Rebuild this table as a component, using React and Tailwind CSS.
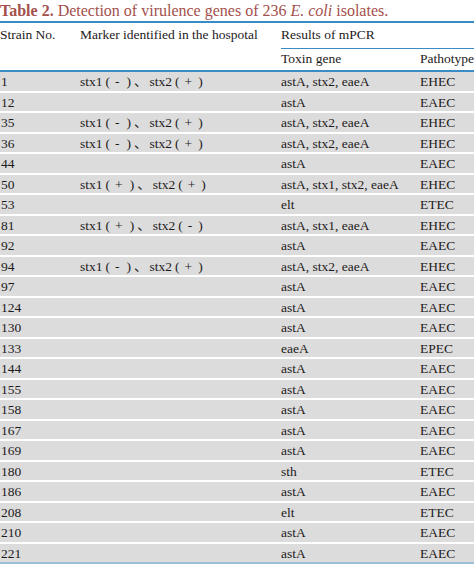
import React from "react";

const rows = [
  ["1", ["-", "+"], "astA, stx2, eaeA", "EHEC"],
  ["12", null, "astA", "EAEC"],
  ["35", ["-", "+"], "astA, stx2, eaeA", "EHEC"],
  ["36", ["-", "+"], "astA, stx2, eaeA", "EHEC"],
  ["44", null, "astA", "EAEC"],
  ["50", ["+", "+"], "astA, stx1, stx2, eaeA", "EHEC"],
  ["53", null, "elt", "ETEC"],
  ["81", ["+", "-"], "astA, stx1, eaeA", "EHEC"],
  ["92", null, "astA", "EAEC"],
  ["94", ["-", "+"], "astA, stx2, eaeA", "EHEC"],
  ["97", null, "astA", "EAEC"],
  ["124", null, "astA", "EAEC"],
  ["130", null, "astA", "EAEC"],
  ["133", null, "eaeA", "EPEC"],
  ["144", null, "astA", "EAEC"],
  ["155", null, "astA", "EAEC"],
  ["158", null, "astA", "EAEC"],
  ["167", null, "astA", "EAEC"],
  ["169", null, "astA", "EAEC"],
  ["180", null, "sth", "ETEC"],
  ["186", null, "astA", "EAEC"],
  ["208", null, "elt", "ETEC"],
  ["210", null, "astA", "EAEC"],
  ["221", null, "astA", "EAEC"],
];

const cols = "grid grid-cols-[80px_201px_139px_1fr]";

// stx1 ( x ) 、stx2 ( y ) with the loose spacing of the printed table
function Marker({ m }) {
  if (!m) return <div />;
  return (
    <div className="flex items-center">
      <span>stx1</span>
      <span className="ml-[3px]">(</span>
      <span className="ml-[5px]">{m[0]}</span>
      <span className="ml-[7px]">)</span>
      <span className="ml-[3px]">、</span>
      <span className="ml-[2px]">stx2</span>
      <span className="ml-[3px]">(</span>
      <span className="ml-[5px]">{m[1]}</span>
      <span className="ml-[6px]">)</span>
    </div>
  );
}

export default function App() {
  return (
    <div
      className="w-[474px] h-[567px] overflow-hidden bg-white text-[#1d1a1b]"
      style={{ fontFamily: '"Liberation Serif", "Noto Sans CJK SC", serif' }}
    >
      {/* caption */}
      <div className="h-[21px] flex items-center text-[16px] text-[#a3504c] whitespace-nowrap">
        <span className="font-bold">Table 2.</span>
        <span className="ml-[4px]">
          Detection of virulence genes of 236 <i>E. coli</i> isolates.
        </span>
      </div>
      <div className="h-[2px] bg-[#3b8cc4]" />

      {/* header */}
      <div className={`${cols} h-[25px] items-center text-[13.5px] whitespace-nowrap`}>
        <div>Strain No.</div>
        <div>Marker identified in the hospotal</div>
        <div className="col-span-2">Results of mPCR</div>
      </div>
      <div className={`${cols} h-[22px] text-[13.5px] whitespace-nowrap`}>
        <div />
        <div />
        <div className="col-span-2 border-t-[1.5px] border-[#3b8cc4] grid grid-cols-[139px_1fr] items-center">
          <div>Toxin gene</div>
          <div>Pathotype</div>
        </div>
      </div>
      <div className="h-[2px] bg-[#3b8cc4]" />

      {/* body */}
      <div className="flex flex-col gap-[2px] text-[13.5px]">
        {rows.map((r) => (
          <div key={r[0]} className={`${cols} h-[18.5px] items-center bg-[#dcdcdc] whitespace-nowrap`}>
            <div className="pl-px">{r[0]}</div>
            <Marker m={r[1]} />
            <div>{r[2]}</div>
            <div>{r[3]}</div>
          </div>
        ))}
      </div>
      <div className="h-[2px] bg-[#9fbfd6]" />
    </div>
  );
}
